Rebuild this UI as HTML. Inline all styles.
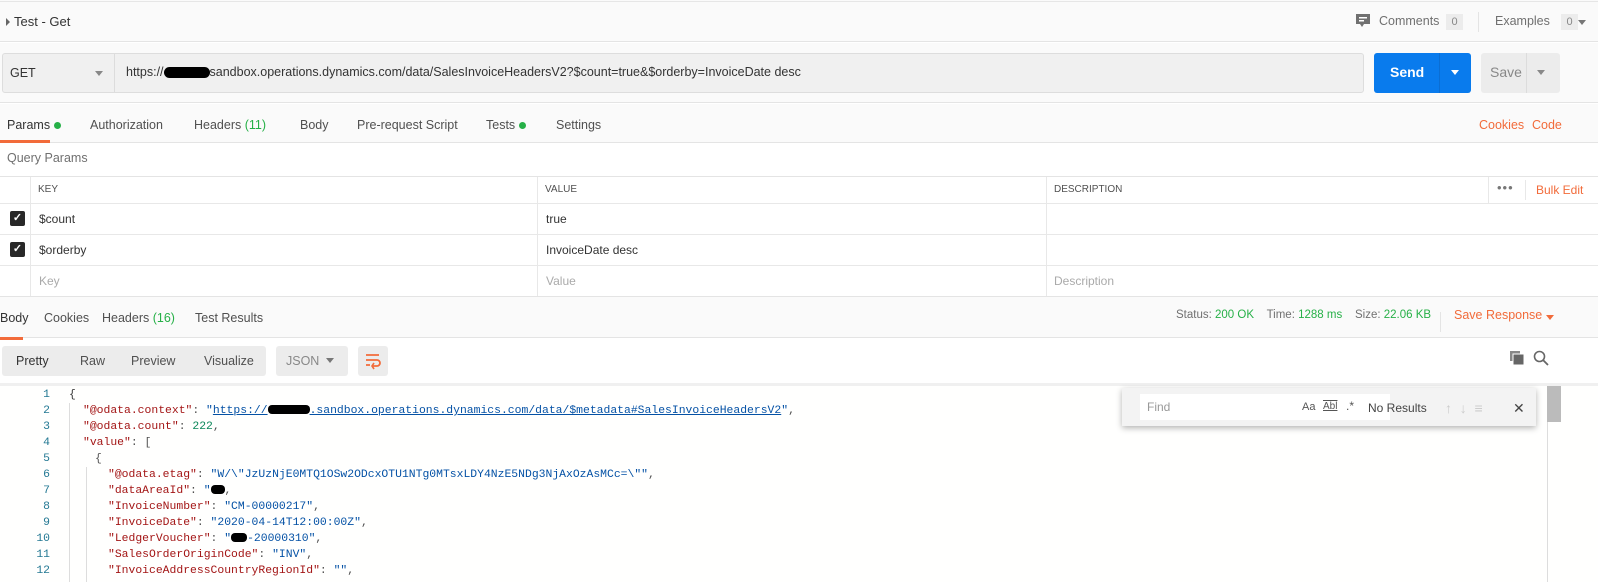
<!DOCTYPE html>
<html><head><meta charset="utf-8"><style>
*{margin:0;padding:0;box-sizing:border-box}
body{width:1598px;height:582px;overflow:hidden;background:#fff;font-family:"Liberation Sans",sans-serif;font-size:12px;color:#505050;position:relative}
.a{position:absolute;white-space:nowrap}
.g{color:#26b047}
.o{color:#f26b3a}
.mono{font-family:"Liberation Mono",monospace;font-size:11.4px}
.k{color:#a31515}.s{color:#0451a5}.n{color:#098658}
.line{position:absolute;height:16px;line-height:16px}
.ln{position:absolute;width:50px;text-align:right;color:#237893}
.cb{position:absolute;width:15px;height:15px;background:#282828;border-radius:2px;color:#fff;font-size:11px;line-height:15px;text-align:center;font-weight:bold}
</style></head><body>
<!-- top bar -->
<div class="a" style="left:0;top:0;width:1598px;height:42px;background:#fafafa;border-bottom:1px solid #e4e4e4"></div>
<div class="a" style="left:0;top:0;width:1598px;height:2px;border-bottom:1px solid #e6e6e6"></div>
<div class="a" style="left:6px;top:18px;width:0;height:0;border-left:4px solid #666;border-top:4px solid transparent;border-bottom:4px solid transparent"></div>
<div class="a" style="left:14px;top:14px;font-size:13px;color:#333">Test - Get</div>
<svg class="a" style="left:1355px;top:13px" width="16" height="17"><path d="M1 1h14v10h-6l-2 3-2-3H1z" fill="#707070"/><rect x="4" y="4" width="8" height="1.5" fill="#fff"/><rect x="4" y="7" width="5" height="1.5" fill="#fff"/></svg>
<div class="a" style="left:1379px;top:14px;font-size:12.5px;color:#707070">Comments</div>
<div class="a" style="left:1446px;top:14px;width:17px;height:16px;background:#ececec;color:#888;font-size:11px;text-align:center;line-height:16px">0</div>
<div class="a" style="left:1478px;top:12px;width:1px;height:20px;background:#e4e4e4"></div>
<div class="a" style="left:1495px;top:14px;font-size:12.5px;color:#707070">Examples</div>
<div class="a" style="left:1561px;top:14px;width:17px;height:16px;background:#ececec;color:#888;font-size:11px;text-align:center;line-height:16px">0</div>
<div class="a" style="left:1578px;top:20px;border-top:5px solid #777;border-left:4px solid transparent;border-right:4px solid transparent"></div>
<!-- url row -->
<div class="a" style="left:0;top:43px;width:1598px;height:60px;background:#fafafa;border-bottom:1px solid #e4e4e4"></div>
<div class="a" style="left:2px;top:53px;width:1362px;height:40px;background:#f0f0f0;border:1px solid #ddd;border-radius:3px"></div>
<div class="a" style="left:114px;top:54px;width:1px;height:38px;background:#dcdcdc"></div>
<div class="a" style="left:10px;top:66px;font-size:12.5px;color:#333">GET</div>
<div class="a" style="left:95px;top:71px;border-top:5px solid #888;border-left:4px solid transparent;border-right:4px solid transparent"></div>
<div class="a" style="left:126px;top:65px;font-size:12.5px;color:#333">https://<span style="display:inline-block;width:46px;height:11px;background:#000;border-radius:6px;vertical-align:middle"></span>sandbox.operations.dynamics.com/data/SalesInvoiceHeadersV2?$count=true&amp;$orderby=InvoiceDate desc</div>
<div class="a" style="left:1374px;top:53px;width:97px;height:40px;background:#097bed;border-radius:3px"></div>
<div class="a" style="left:1439px;top:53px;width:1px;height:40px;background:#0a6ed4"></div>
<div class="a" style="left:1390px;top:64px;font-size:14px;font-weight:bold;color:#fff">Send</div>
<div class="a" style="left:1451px;top:70px;border-top:5px solid #fff;border-left:4px solid transparent;border-right:4px solid transparent"></div>
<div class="a" style="left:1481px;top:53px;width:79px;height:40px;background:#ececec;border-radius:3px"></div>
<div class="a" style="left:1526px;top:53px;width:1px;height:40px;background:#dcdcdc"></div>
<div class="a" style="left:1490px;top:64px;font-size:14px;color:#888">Save</div>
<div class="a" style="left:1537px;top:70px;border-top:5px solid #888;border-left:4px solid transparent;border-right:4px solid transparent"></div>
<!-- tabs -->
<div class="a" style="left:0;top:104px;width:1598px;height:39px;background:#fafafa;border-bottom:1px solid #e4e4e4"></div>
<div class="a" style="left:7px;top:118px;font-size:12.5px;color:#333">Params <span style="display:inline-block;width:7px;height:7px;border-radius:50%;background:#26b047"></span></div>
<div class="a" style="left:0;top:140px;width:50px;height:3px;background:#f26b3a"></div>
<div class="a" style="left:90px;top:118px;font-size:12.5px">Authorization</div>
<div class="a" style="left:194px;top:118px;font-size:12.5px">Headers <span class="g">(11)</span></div>
<div class="a" style="left:300px;top:118px;font-size:12.5px">Body</div>
<div class="a" style="left:357px;top:118px;font-size:12.5px">Pre-request Script</div>
<div class="a" style="left:486px;top:118px;font-size:12.5px">Tests <span style="display:inline-block;width:7px;height:7px;border-radius:50%;background:#26b047"></span></div>
<div class="a" style="left:556px;top:118px;font-size:12.5px">Settings</div>
<div class="a o" style="left:1479px;top:118px;font-size:12.5px">Cookies</div>
<div class="a o" style="left:1532px;top:118px;font-size:12.5px">Code</div>
<div class="a" style="left:7px;top:151px;font-size:12.5px;color:#707070">Query Params</div>
<!-- table -->
<div class="a" style="left:0;top:176px;width:1598px;height:1px;background:#e4e4e4"></div>
<div class="a" style="left:0;top:203px;width:1598px;height:1px;background:#e8e8e8"></div>
<div class="a" style="left:0;top:234px;width:1598px;height:1px;background:#e8e8e8"></div>
<div class="a" style="left:0;top:265px;width:1598px;height:1px;background:#e8e8e8"></div>
<div class="a" style="left:0;top:296px;width:1598px;height:1px;background:#e4e4e4"></div>
<div class="a" style="left:30px;top:177px;width:1px;height:119px;background:#e8e8e8"></div>
<div class="a" style="left:537px;top:177px;width:1px;height:119px;background:#e8e8e8"></div>
<div class="a" style="left:1046px;top:177px;width:1px;height:119px;background:#e8e8e8"></div>
<div class="a" style="left:1488px;top:177px;width:1px;height:27px;background:#e8e8e8"></div>
<div class="a" style="left:1525px;top:180px;width:1px;height:20px;background:#e8e8e8"></div>
<div class="a" style="left:38px;top:184px;font-size:10px;color:#505050">KEY</div>
<div class="a" style="left:545px;top:184px;font-size:10px">VALUE</div>
<div class="a" style="left:1054px;top:184px;font-size:10px">DESCRIPTION</div>
<div class="a" style="left:1497px;top:180px;font-size:13px;color:#777;letter-spacing:1px">•••</div>
<div class="a o" style="left:1536px;top:183px;font-size:12px">Bulk Edit</div>
<div class="cb" style="left:10px;top:211px">✓</div>
<div class="cb" style="left:10px;top:242px">✓</div>
<div class="a" style="left:39px;top:212px;font-size:12px;color:#333">$count</div>
<div class="a" style="left:546px;top:212px;font-size:12px;color:#333">true</div>
<div class="a" style="left:39px;top:243px;font-size:12px;color:#333">$orderby</div>
<div class="a" style="left:546px;top:243px;font-size:12px;color:#333">InvoiceDate desc</div>
<div class="a" style="left:39px;top:274px;font-size:12px;color:#aaa">Key</div>
<div class="a" style="left:546px;top:274px;font-size:12px;color:#aaa">Value</div>
<div class="a" style="left:1054px;top:274px;font-size:12px;color:#aaa">Description</div>
<!-- response tabs -->
<div class="a" style="left:0;top:297px;width:1598px;height:41px;background:#fafafa;border-bottom:1px solid #e4e4e4"></div>
<div class="a" style="left:0;top:311px;font-size:12.5px;color:#333">Body</div>
<div class="a" style="left:0;top:337px;width:23px;height:3px;background:#f26b3a"></div>
<div class="a" style="left:44px;top:311px;font-size:12.5px">Cookies</div>
<div class="a" style="left:102px;top:311px;font-size:12.5px">Headers <span class="g">(16)</span></div>
<div class="a" style="left:195px;top:311px;font-size:12.5px">Test Results</div>
<div class="a" style="left:1176px;top:309px;font-size:11.5px;color:#707070">Status: <span class="g">200 OK</span>&nbsp;&nbsp;&nbsp; Time: <span class="g">1288 ms</span>&nbsp;&nbsp;&nbsp; Size: <span class="g">22.06 KB</span></div>
<div class="a" style="left:1440px;top:312px;width:1px;height:20px;background:#e4e4e4"></div>
<div class="a o" style="left:1454px;top:308px;font-size:12.5px">Save Response</div>
<div class="a" style="left:1546px;top:315px;border-top:5px solid #f26b3a;border-left:4px solid transparent;border-right:4px solid transparent"></div>
<!-- toolbar -->
<div class="a" style="left:2px;top:346px;width:264px;height:30px;background:#ececec;border-radius:3px"></div>
<div class="a" style="left:16px;top:354px;font-size:12.5px;color:#333">Pretty</div>
<div class="a" style="left:80px;top:354px;font-size:12.5px">Raw</div>
<div class="a" style="left:131px;top:354px;font-size:12.5px">Preview</div>
<div class="a" style="left:204px;top:354px;font-size:12.5px">Visualize</div>
<div class="a" style="left:276px;top:346px;width:72px;height:30px;background:#ececec;border-radius:3px"></div>
<div class="a" style="left:286px;top:354px;font-size:12.5px;color:#888">JSON</div>
<div class="a" style="left:326px;top:358px;border-top:5px solid #777;border-left:4px solid transparent;border-right:4px solid transparent"></div>
<div class="a" style="left:358px;top:346px;width:30px;height:30px;background:#ececec;border-radius:3px"></div>
<svg class="a" style="left:364px;top:352px" width="18" height="18"><path d="M2 3h13M2 8h11a3 3 0 0 1 0 6h-4M2 13h4" stroke="#f26b3a" stroke-width="1.8" fill="none"/><path d="M10 11l-2 3 2 3" stroke="#f26b3a" stroke-width="1.6" fill="none"/></svg>
<svg class="a" style="left:1509px;top:350px" width="16" height="16"><rect x="1" y="1" width="10" height="10" fill="#888"/><rect x="4" y="4" width="11" height="11" fill="#666" stroke="#fff"/></svg>
<svg class="a" style="left:1533px;top:350px" width="16" height="16"><circle cx="6.5" cy="6.5" r="5" stroke="#666" stroke-width="1.6" fill="none"/><path d="M10 10l5 5" stroke="#666" stroke-width="1.8"/></svg>
<!-- code -->
<div class="a" style="left:0;top:383px;width:1598px;height:3px;background:#f0f0f0"></div>
<div class="a" style="left:0;top:386px;width:1598px;height:196px;background:#fffffe"></div>
<div class="a" style="left:1547px;top:386px;width:14px;height:196px;border-left:1px solid #ddd"></div>
<div class="a" style="left:1547px;top:386px;width:14px;height:36px;background:#bbb"></div>
<div class="a" style="left:69px;top:403px;width:1px;height:179px;background:#ddd"></div>
<div class="a" style="left:86px;top:467px;width:1px;height:115px;background:#ddd"></div>
<div class="mono">
<div class="ln line" style="left:0;top:387px">1</div>
<div class="ln line" style="left:0;top:403px">2</div>
<div class="ln line" style="left:0;top:419px">3</div>
<div class="ln line" style="left:0;top:435px">4</div>
<div class="ln line" style="left:0;top:451px">5</div>
<div class="ln line" style="left:0;top:467px">6</div>
<div class="ln line" style="left:0;top:483px">7</div>
<div class="ln line" style="left:0;top:499px">8</div>
<div class="ln line" style="left:0;top:515px">9</div>
<div class="ln line" style="left:0;top:531px">10</div>
<div class="ln line" style="left:0;top:547px">11</div>
<div class="ln line" style="left:0;top:563px">12</div>
<div class="line a" style="left:69px;top:387px;color:#333">{</div>
<div class="line a" style="left:83px;top:403px"><span class="k">"@odata.context"</span>: <span class="s">"<u>https://<span style="display:inline-block;width:42px;height:9px;background:#000;border-radius:4px;vertical-align:middle"></span>.sandbox.operations.dynamics.com/data/$metadata#SalesInvoiceHeadersV2</u>"</span>,</div>
<div class="line a" style="left:83px;top:419px"><span class="k">"@odata.count"</span>: <span class="n">222</span>,</div>
<div class="line a" style="left:83px;top:435px"><span class="k">"value"</span>: [</div>
<div class="line a" style="left:95px;top:451px">{</div>
<div class="line a" style="left:108px;top:467px"><span class="k">"@odata.etag"</span>: <span class="s">"W/\"JzUzNjE0MTQ1OSw2ODcxOTU1NTg0MTsxLDY4NzE5NDg3NjAxOzAsMCc=\""</span>,</div>
<div class="line a" style="left:108px;top:483px"><span class="k">"dataAreaId"</span>: <span class="s">"<span style="display:inline-block;width:14px;height:9px;background:#000;border-radius:4px;vertical-align:middle"></span></span>,</div>
<div class="line a" style="left:108px;top:499px"><span class="k">"InvoiceNumber"</span>: <span class="s">"CM-00000217"</span>,</div>
<div class="line a" style="left:108px;top:515px"><span class="k">"InvoiceDate"</span>: <span class="s">"2020-04-14T12:00:00Z"</span>,</div>
<div class="line a" style="left:108px;top:531px"><span class="k">"LedgerVoucher"</span>: <span class="s">"<span style="display:inline-block;width:16px;height:9px;background:#000;border-radius:4px;vertical-align:middle"></span>-20000310"</span>,</div>
<div class="line a" style="left:108px;top:547px"><span class="k">"SalesOrderOriginCode"</span>: <span class="s">"INV"</span>,</div>
<div class="line a" style="left:108px;top:563px"><span class="k">"InvoiceAddressCountryRegionId"</span>: <span class="s">""</span>,</div>
</div>
<!-- find widget -->
<div class="a" style="left:1122px;top:388px;width:414px;height:38px;background:#f3f3f3;box-shadow:0 2px 6px rgba(0,0,0,.3)"></div>
<div class="a" style="left:1140px;top:394px;width:250px;height:26px;background:#fff"></div>
<div class="a" style="left:1147px;top:395px;font-size:12px;color:#999;line-height:24px">Find</div>
<div class="a" style="left:1302px;top:395px;font-size:11px;color:#555;line-height:24px">Aa</div>
<div class="a" style="left:1323px;top:395px;font-size:10px;color:#555;line-height:24px;text-decoration:underline overline">Abl</div>
<div class="a" style="left:1346px;top:394px;font-size:12px;color:#555;line-height:24px">.*</div>
<div class="a" style="left:1368px;top:396px;font-size:12px;color:#444;line-height:24px">No Results</div>
<div class="a" style="left:1445px;top:396px;font-size:14px;color:#ccc;line-height:24px">↑&nbsp;&nbsp;↓&nbsp;&nbsp;≡</div>
<div class="a" style="left:1513px;top:396px;font-size:14px;color:#444;line-height:24px">✕</div>
</body></html>
